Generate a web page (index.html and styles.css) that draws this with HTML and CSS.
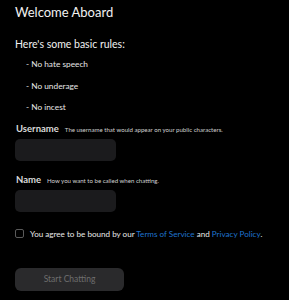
FILE: index.html
```html
<!DOCTYPE html>
<html>
<head>
<meta charset="utf-8">
<link rel="stylesheet" href="styles.css">
</head>
<body>
<div class="page">
  <h1 class="title">Welcome Aboard</h1>
  <h2 class="subtitle">Here's some basic rules:</h2>
  <ul class="rules">
    <li>- No hate speech</li>
    <li>- No underage</li>
    <li>- No incest</li>
  </ul>
  <div class="field field-user">
    <div class="label-row"><span class="label">Username</span><span class="hint">The username that would appear on your public characters.</span></div>
    <div class="input"></div>
  </div>
  <div class="field field-name">
    <div class="label-row"><span class="label">Name</span><span class="hint">How you want to be called when chatting.</span></div>
    <div class="input"></div>
  </div>
  <label class="agree"><span class="box"></span><span>You agree to be bound by our <a class="link">Terms of Service</a> and <a class="link">Privacy Policy</a>.</span></label>
  <button class="start">Start Chatting</button>
</div>
</body>
</html>
```
FILE: styles.css
```css
html, body {
  margin: 0;
  padding: 0;
  background: #000;
}
.page {
  width: 289px;
  height: 300px;
  padding: 0 15px;
  box-sizing: border-box;
  font-family: Lato, "Noto Sans", sans-serif;
  color: #e6e6e6;
  overflow: hidden;
}
.title {
  margin: 0;
  padding-top: 2px;
  font-size: 13px;
  font-weight: 400;
  line-height: 20px;
  color: #f2f2f2;
}
.subtitle {
  margin: 14px 0 0;
  font-size: 10.5px;
  font-weight: 400;
  line-height: 16px;
  color: #f2f2f2;
}
.rules {
  list-style: none;
  margin: 6px 0 0;
  padding: 0 0 0 11px;
}
.rules li {
  font-size: 8.3px;
  line-height: 12px;
  margin-bottom: 9.5px;
  color: #e6e6e6;
}
.field {
  display: flex;
  flex-direction: column;
}
.field-user { margin-top: 1px; }
.field-name { margin-top: 13px; }
.label-row {
  display: flex;
  align-items: baseline;
  gap: 6px;
  padding-left: 1px;
  line-height: 12px;
}
.label {
  font-size: 9.5px;
  font-weight: 700;
  color: #dadada;
}
.hint {
  font-size: 6.1px;
  color: #d0d0d0;
}
.input {
  margin-top: 3px;
  width: 101px;
  height: 22px;
  border-radius: 5px;
  background: #1b1b1d;
}
.agree {
  display: flex;
  align-items: center;
  gap: 6px;
  margin-top: 16px;
  font-size: 8.1px;
  line-height: 12px;
  color: #e8e8e8;
  white-space: nowrap;
}
.box {
  width: 7px;
  height: 7px;
  border: 1px solid #5a5a5a;
  border-radius: 2px;
  flex: none;
}
.link {
  color: #1f74cf;
}
.start {
  display: block;
  margin-top: 28px;
  width: 109px;
  height: 23px;
  border: none;
  border-radius: 6px;
  background: #2a2a2c;
  color: #6e6e6e;
  font-family: Lato, "Noto Sans", sans-serif;
  font-size: 8.5px;
  padding: 0;
}
```
